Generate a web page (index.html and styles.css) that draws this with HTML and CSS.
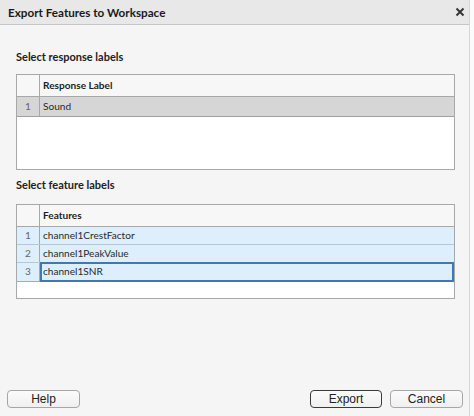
FILE: index.html
```html
<!DOCTYPE html>
<html>
<head>
<meta charset="utf-8">
<link rel="stylesheet" href="styles.css">
</head>
<body>
<div class="window">
  <div class="titlebar">
    <span class="title">Export Features to Workspace</span>
    <svg class="close" width="10" height="10" viewBox="0 0 10 10"><path d="M1.5 1.5 L8.5 8.5 M8.5 1.5 L1.5 8.5" stroke="#333333" stroke-width="1.9" fill="none"/></svg>
  </div>
  <div class="content">
    <div class="label first">Select response labels</div>
    <div class="grid grid1">
      <div class="row head"><div class="idx"></div><div class="cell">Response Label</div></div>
      <div class="row sel-gray"><div class="idx">1</div><div class="cell">Sound</div></div>
    </div>
    <div class="label second">Select feature labels</div>
    <div class="grid grid2">
      <div class="row head"><div class="idx"></div><div class="cell">Features</div></div>
      <div class="row sel-blue"><div class="idx">1</div><div class="cell">channel1CrestFactor</div></div>
      <div class="row sel-blue"><div class="idx">2</div><div class="cell">channel1PeakValue</div></div>
      <div class="row sel-blue last"><div class="idx">3</div><div class="cell focus">channel1SNR</div></div>
    </div>
  </div>
  <div class="footer">
    <button class="btn">Help</button>
    <div class="right">
      <button class="btn default">Export</button>
      <button class="btn">Cancel</button>
    </div>
  </div>
</div>
</body>
</html>
```
FILE: styles.css
```css
html, body {
  margin: 0;
  padding: 0;
  background: #fbfbfb;
}
.window {
  width: 469px;
  height: 416px;
  background: #f5f5f5;
  border-right: 1px solid #d6d6d6;
  display: flex;
  flex-direction: column;
  font-family: Lato, "Noto Sans", sans-serif;
}
.titlebar {
  height: 24px;
  background: #e8e8e8;
  border-bottom: 1px solid #c6c6c6;
  display: flex;
  align-items: center;
  justify-content: space-between;
  padding: 0 4px 0 8px;
  flex: none;
}
.title {
  font-size: 11.7px;
  font-weight: 700;
  color: #1a1a1a;
}
.close {
  display: block;
}
.content {
  flex: 1;
  padding: 0 14px 0 16px;
}
.label {
  font-size: 11px;
  font-weight: 700;
  color: #222;
  height: 16px;
  line-height: 16px;
}
.label.first {
  margin-top: 24px;
  margin-bottom: 9px;
}
.label.second {
  margin-top: 7px;
  margin-bottom: 11px;
}
.grid {
  box-sizing: border-box;
  border: 1px solid #a8a8a8;
  background: #ffffff;
  font-size: 10.1px;
  color: #2a2a2a;
}
.grid1 { height: 96px; }
.grid2 { height: 95px; }
.row {
  display: grid;
  grid-template-columns: 23px 1fr;
  box-sizing: border-box;
  height: 18px;
  border-bottom: 1px solid #b9c6d3;
}
.row .idx {
  border-right: 1px solid #a8a8a8;
  text-align: center;
  color: #666;
  line-height: 17px;
}
.row .cell {
  padding-left: 3px;
  line-height: 17px;
}
.row.head {
  height: 22px;
  background: #f7f7f7;
  border-bottom: 1px solid #a8a8a8;
}
.row.head .cell {
  font-weight: 700;
  line-height: 21px;
  color: #1e1e1e;
}
.row.sel-gray {
  height: 20px;
  background: #d6d6d6;
  border-bottom: 1px solid #a0a0a0;
}
.row.sel-gray .cell, .row.sel-gray .idx { line-height: 19px; }
.row.sel-blue {
  background: #ddeefc;
}
.row.sel-blue.last {
  height: 19px;
  border-bottom: 1px solid #a8a8a8;
}
.cell.focus {
  border: 2px solid #3f78b2;
  line-height: 14px;
  padding-left: 1px;
  margin: -1px 0 -1px 0;
}
.footer {
  flex: none;
  display: flex;
  justify-content: space-between;
  padding: 0 6px 8px 7px;
}
.right {
  display: flex;
  gap: 8px;
}
.btn {
  width: 73px;
  height: 18px;
  box-sizing: border-box;
  border: 1px solid #a6a6a6;
  border-radius: 4px;
  background: linear-gradient(#fbfbfb, #f0f0f0);
  font-family: "Liberation Sans", Arial, sans-serif;
  font-size: 12px;
  color: #222;
  padding: 0;
  line-height: 16px;
}
.btn.default {
  border: 1.5px solid #3a3a3a;
  width: 72px;
}
```
